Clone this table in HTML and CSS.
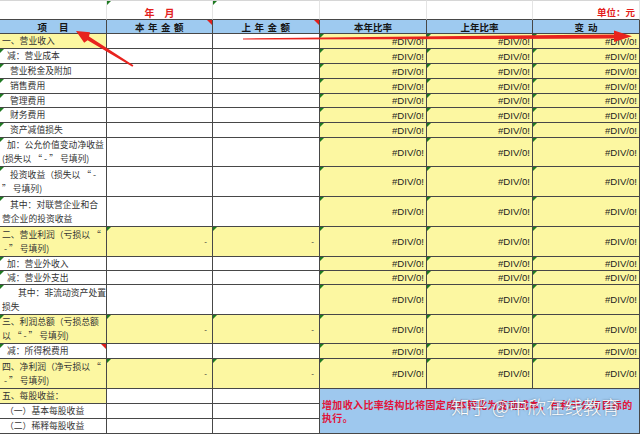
FILE: index.html
```html
<!DOCTYPE html>
<html lang="zh-CN">
<head>
<meta charset="utf-8">
<title>利润表</title>
<link rel="stylesheet" href="styles.css">
</head>
<body>
<div class="sheet">
  <!-- title row -->
  <div class="c top g0"></div>
  <div class="c top title g">年　月</div>
  <div class="c top g"></div>
  <div class="c top"></div>
  <div class="c top"></div>
  <div class="c top unit">单位：元</div>

  <!-- header -->
  <div class="c hd"><span class="sp12">项</span>目</div>
  <div class="c hd wide r">本年金额</div>
  <div class="c hd wide r">上年金额</div>
  <div class="c hd">本年比率</div>
  <div class="c hd">上年比率</div>
  <div class="c hd"><span class="sp4">变</span>动</div>

  <!-- 一 -->
  <div class="c lab y"><span>一、营业收入</span></div>
  <div class="c"></div><div class="c"></div>
  <div class="c y num g">#DIV/0!</div><div class="c y num g">#DIV/0!</div><div class="c y num g">#DIV/0!</div>

  <div class="c lab g"><span class="t5">减：营业成本</span></div>
  <div class="c"></div><div class="c"></div>
  <div class="c y num g">#DIV/0!</div><div class="c y num g">#DIV/0!</div><div class="c y num g">#DIV/0!</div>

  <div class="c lab g"><span class="t8">营业税金及附加</span></div>
  <div class="c"></div><div class="c"></div>
  <div class="c y num g">#DIV/0!</div><div class="c y num g">#DIV/0!</div><div class="c y num g">#DIV/0!</div>

  <div class="c lab g"><span class="t8">销售费用</span></div>
  <div class="c"></div><div class="c"></div>
  <div class="c y num g">#DIV/0!</div><div class="c y num g">#DIV/0!</div><div class="c y num g">#DIV/0!</div>

  <div class="c lab g"><span class="t8">管理费用</span></div>
  <div class="c"></div><div class="c"></div>
  <div class="c y num g">#DIV/0!</div><div class="c y num g">#DIV/0!</div><div class="c y num g">#DIV/0!</div>

  <div class="c lab g"><span class="t8">财务费用</span></div>
  <div class="c"></div><div class="c"></div>
  <div class="c y num g">#DIV/0!</div><div class="c y num g">#DIV/0!</div><div class="c y num g">#DIV/0!</div>

  <div class="c lab g"><span class="t8">资产减值损失</span></div>
  <div class="c"></div><div class="c"></div>
  <div class="c y num g">#DIV/0!</div><div class="c y num g">#DIV/0!</div><div class="c y num g">#DIV/0!</div>

  <div class="c lab g"><span class="t5">加：公允价值变动净收益<br>(损失以 “ - ” 号填列)</span></div>
  <div class="c"></div><div class="c"></div>
  <div class="c y num g">#DIV/0!</div><div class="c y num g">#DIV/0!</div><div class="c y num g">#DIV/0!</div>

  <div class="c lab g"><span class="t8">投资收益（损失以 “ -<br>” 号填列)</span></div>
  <div class="c"></div><div class="c"></div>
  <div class="c y num g">#DIV/0!</div><div class="c y num g">#DIV/0!</div><div class="c y num g">#DIV/0!</div>

  <div class="c lab g"><span class="t8">其中：对联营企业和合<br>营企业的投资收益</span></div>
  <div class="c"></div><div class="c"></div>
  <div class="c y num g">#DIV/0!</div><div class="c y num g">#DIV/0!</div><div class="c y num g">#DIV/0!</div>

  <!-- 二 -->
  <div class="c lab y"><span>二、营业利润（亏损以 “<br>&nbsp;- ” 号填列)</span></div>
  <div class="c y dash g">-</div><div class="c y dash g">-</div>
  <div class="c y num g">#DIV/0!</div><div class="c y num g">#DIV/0!</div><div class="c y num g">#DIV/0!</div>

  <div class="c lab g"><span class="t5">加：营业外收入</span></div>
  <div class="c"></div><div class="c"></div>
  <div class="c y num g">#DIV/0!</div><div class="c y num g">#DIV/0!</div><div class="c y num g">#DIV/0!</div>

  <div class="c lab g"><span class="t5">减：营业外支出</span></div>
  <div class="c"></div><div class="c"></div>
  <div class="c y num g">#DIV/0!</div><div class="c y num g">#DIV/0!</div><div class="c y num g">#DIV/0!</div>

  <div class="c lab g"><span class="t16">其中：非流动资产处置<br>损失</span></div>
  <div class="c"></div><div class="c"></div>
  <div class="c y num g">#DIV/0!</div><div class="c y num g">#DIV/0!</div><div class="c y num g">#DIV/0!</div>

  <!-- 三 -->
  <div class="c lab y g"><span>三、利润总额（亏损总额<br>以 “ - ” 号填列)</span></div>
  <div class="c y dash g">-</div><div class="c y dash g">-</div>
  <div class="c y num g">#DIV/0!</div><div class="c y num g">#DIV/0!</div><div class="c y num g">#DIV/0!</div>

  <div class="c lab g r"><span class="t5">减：所得税费用</span></div>
  <div class="c"></div><div class="c"></div>
  <div class="c y num g">#DIV/0!</div><div class="c y num g">#DIV/0!</div><div class="c y num g">#DIV/0!</div>

  <!-- 四 -->
  <div class="c lab y"><span>四、净利润（净亏损以 “<br>&nbsp;- ” 号填列)</span></div>
  <div class="c y dash g">-</div><div class="c y dash g">-</div>
  <div class="c y num g">#DIV/0!</div><div class="c y num g">#DIV/0!</div><div class="c y num g">#DIV/0!</div>

  <!-- 五 -->
  <div class="c lab y"><span>五、每股收益：</span></div>
  <div class="c"></div><div class="c"></div>

  <div class="c lab"><span class="t3">（一）基本每股收益</span></div>
  <div class="c"></div><div class="c"></div>

  <div class="c lab"><span class="t3">（二）稀释每股收益</span></div>
  <div class="c"></div><div class="c"></div>

  <div class="c note"><span>增加收入比率结构比将固定成本转化为变动成本，有利于公司目标的<br>执行。</span></div>

  <svg class="marks" width="640" height="434" viewBox="0 0 640 434">
    <polygon fill="#e8231e" points="133.4,65.2 132.4,66.8 87.6,40.2 84.2,42.8 76,31 90,32.2 89.0,36.6"/>
    <polygon fill="#e8231e" points="243,38.4 243,39.6 614,38.6 614,42 632,36.2 614,30.6 614,34.4"/>
  </svg>
  <div class="wm">知乎 @中欣在线教育</div>
</div>
</body>
</html>
```

FILE: styles.css
```css
html, body {
  margin: 0;
  padding: 0;
  background: #ffffff;
}

body {
  width: 640px;
  height: 434px;
  overflow: hidden;
  font-family: "Noto Sans CJK SC", "Liberation Sans", sans-serif;
}

.sheet {
  position: relative;
  display: grid;
  grid-template-columns: 107px 106px 107px 107px 106px 107px;
  grid-template-rows: 20px 14px 15px 15px 15px 15px 14px 15px 15px 29px 30px 30px 30px 14px 14px 30px 29px 15px 30px 15px 15px 15px;
  width: 640px;
  height: 434px;
}

.c {
  box-sizing: border-box;
  position: relative;
  display: flex;
  align-items: center;
  overflow: hidden;
  white-space: nowrap;
  border-right: 1px solid #474747;
  border-bottom: 1px solid #474747;
}

.top {
  border-top: 1px solid #d6d6d6;
  border-right: 1px solid #e4e4e4;
  background: #ffffff;
}

.title {
  justify-content: center;
  color: #e3201c;
  font-weight: bold;
  font-size: 10px;
  padding-top: 4px;
}

.unit {
  justify-content: flex-end;
  padding-right: 4px;
  padding-top: 4px;
  color: #e3201c;
  font-weight: bold;
  font-size: 9.5px;
}

.hd {
  justify-content: center;
  background: #9ecaf0;
  color: #151515;
  font-weight: bold;
  font-size: 9.5px;
}

.hd.wide {
  letter-spacing: 3.5px;
  padding-left: 3px;
}

.sp12 {
  margin-right: 12px;
}

.sp4 {
  margin-right: 4px;
}

.lab {
  font-size: 8.8px;
  line-height: 14px;
  color: #333333;
  padding-left: 2px;
}

.lab span {
  display: block;
}

.t3 { text-indent: 3px; }
.t5 { text-indent: 5px; }
.t8 { text-indent: 8px; }
.t16 { text-indent: 16px; }

.y {
  background: #fcf7a1;
}

.num {
  justify-content: flex-end;
  padding-right: 2px;
  font-family: "Liberation Sans", sans-serif;
  font-size: 9.6px;
  color: #1e1e1e;
}

.dash {
  justify-content: flex-end;
  padding-right: 5px;
  font-family: "Liberation Sans", sans-serif;
  font-size: 8px;
  color: #333333;
}

.g::before {
  content: "";
  position: absolute;
  left: 0;
  top: 0;
  border-top: 4px solid #1f7a22;
  border-right: 4px solid transparent;
}

.r::after {
  content: "";
  position: absolute;
  right: 0;
  top: 0;
  border-top: 5px solid #e0201c;
  border-left: 5px solid transparent;
}

.note {
  grid-column: 4 / 7;
  grid-row: 20 / 23;
  background: #9ec8ee;
  white-space: nowrap;
  padding-left: 2px;
  color: #e1143a;
  font-weight: bold;
  font-size: 10px;
  line-height: 13px;
  letter-spacing: 0.35px;
}

.marks {
  position: absolute;
  left: 0;
  top: 0;
  pointer-events: none;
}

.wm {
  position: absolute;
  left: 451px;
  top: 394px;
  font-size: 18.5px;
  line-height: 24px;
  font-weight: 300;
  color: #ffffff;
  white-space: nowrap;
  text-shadow: 0 0 2px rgba(40, 40, 40, 0.55);
  pointer-events: none;
}
```
